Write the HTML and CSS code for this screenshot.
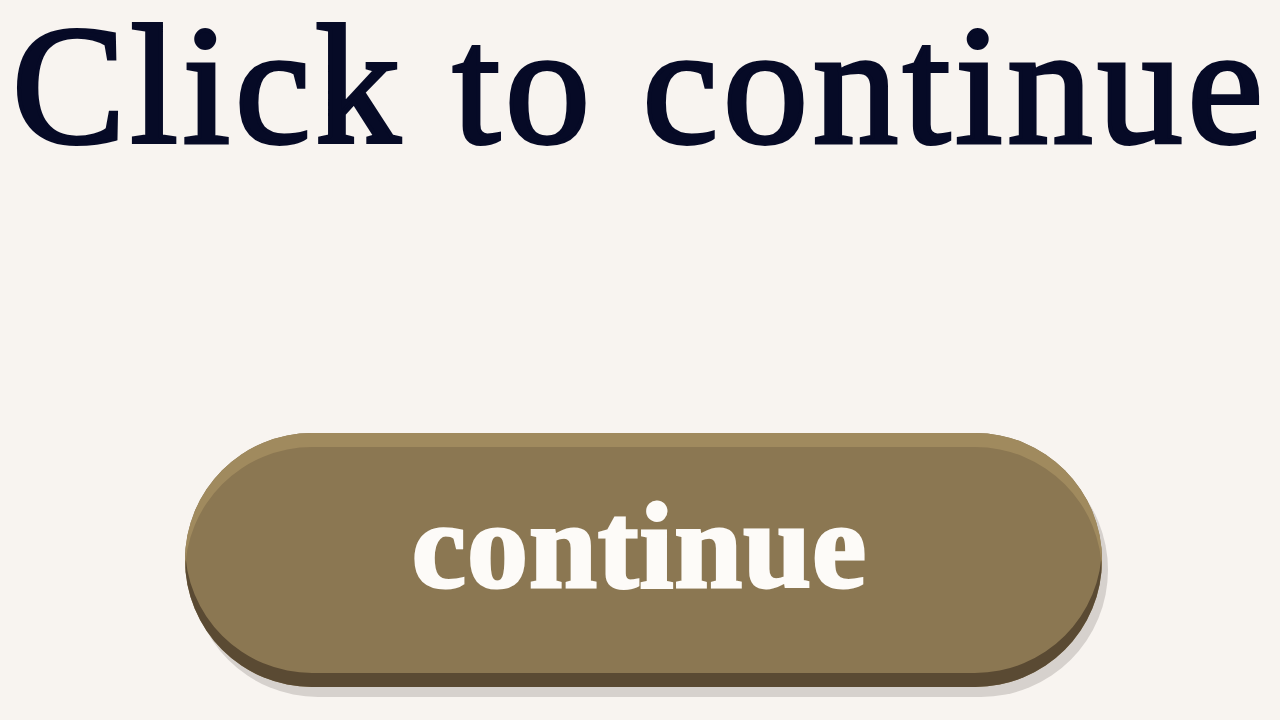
FILE: index.html
```html
<!DOCTYPE html>
<html lang="en">
<head>
<meta charset="utf-8">
<title>Click to continue</title>
<link rel="stylesheet" href="styles.css">
</head>
<body>
  <main class="screen">
    <h1 class="prompt">Click to continue</h1>
    <button class="continue-btn" type="button">continue</button>
  </main>
</body>
</html>
```

FILE: styles.css
```css
html, body {
  margin: 0;
  padding: 0;
  background: #f8f4f0;
}

.screen {
  width: 1280px;
  height: 720px;
  display: flex;
  flex-direction: column;
  align-items: center;
  box-sizing: border-box;
  overflow: hidden;
}

/* Regular serif thickened with a stroke to a medium weight */
.prompt {
  margin: 0;
  font-family: "Liberation Serif", "Times New Roman", serif;
  font-weight: 400;
  font-size: 170px;
  letter-spacing: 5px;
  line-height: 1;
  color: #060a26;
  -webkit-text-stroke: 4px #060a26;
  white-space: nowrap;
}

/* Pill button: lighter rim on top, darker base below, flat drop shadow */
.continue-btn {
  margin-top: 263px;
  margin-left: 7px;
  width: 917px;
  height: 254px;
  border: none;
  border-radius: 9999px;
  background: #8b7752;
  box-shadow:
    inset 0 14px 0 #a08a5e,
    inset 0 -14px 0 #5a4a33,
    6px 10px 0 #d6d1cd;
  display: flex;
  align-items: center;
  justify-content: center;
  padding: 0 8px 28px 0;
  box-sizing: border-box;
  font-family: "Liberation Serif", "Times New Roman", serif;
  font-weight: 700;
  font-size: 122px;
  letter-spacing: 1px;
  line-height: 1;
  color: #fdfbf8;
  -webkit-text-stroke: 3px #fdfbf8;
  cursor: pointer;
}
```
